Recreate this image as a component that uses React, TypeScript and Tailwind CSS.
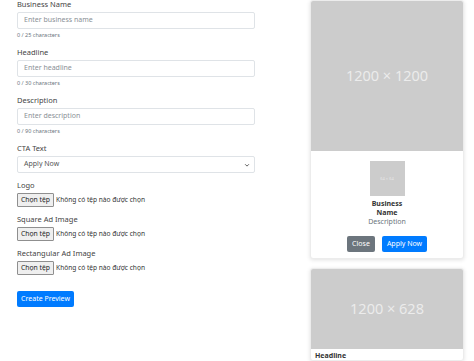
import React from 'react';

const font = { fontFamily: '"Noto Sans", "Open Sans", sans-serif' };

function Field({ label, placeholder, helper }: { label: string; placeholder: string; helper: string }) {
  return (
    <div className="mb-[8px]">
      <div className="h-[9px] mb-[3px] text-[7.5px] leading-[9px] text-[#444]">{label}</div>
      <div className="h-[17px] border border-[#dfe3e7] rounded-[2px] bg-white flex items-center px-[6px] text-[7px] text-[#8a9096]">
        {placeholder}
      </div>
      <div className="mt-[1px] h-[10px] text-[5.5px] leading-[10px] text-[#6c757d]">{helper}</div>
    </div>
  );
}

function FileField({ label }: { label: string }) {
  return (
    <div className="mb-[8px]">
      <div className="h-[9px] mb-[3px] text-[7.5px] leading-[9px] text-[#444]">{label}</div>
      <div className="flex items-center h-[14px] gap-[2px]">
        <span className="h-[14px] px-[3px] border border-[#8f8f8f] rounded-[1px] bg-[#efefef] text-[6.8px] leading-[12px] text-[#222]">
          Chọn tệp
        </span>
        <span className="text-[6.6px] text-[#333]">Không có tệp nào được chọn</span>
      </div>
    </div>
  );
}

export default function App() {
  return (
    <div className="w-[474px] h-[361px] overflow-hidden bg-white flex" style={font}>
      <div className="ml-[17px] w-[238px] shrink-0">
        <Field label="Business Name" placeholder="Enter business name" helper="0 / 25 characters" />
        <Field label="Headline" placeholder="Enter headline" helper="0 / 30 characters" />
        <Field label="Description" placeholder="Enter description" helper="0 / 90 characters" />

        <div className="mb-[8px]">
          <div className="h-[9px] mb-[3px] text-[7.5px] leading-[9px] text-[#444]">CTA Text</div>
          <div className="h-[17px] border border-[#dfe3e7] rounded-[2px] bg-white flex items-center justify-between pl-[6px] pr-[4px] text-[7px] text-[#555]">
            <span>Apply Now</span>
            <svg width="6" height="6" viewBox="0 0 16 16" fill="none" stroke="#555" strokeWidth="2.5">
              <path d="M3 6l5 5 5-5" />
            </svg>
          </div>
        </div>

        <FileField label="Logo" />
        <FileField label="Square Ad Image" />
        <FileField label="Rectangular Ad Image" />

        <button className="h-[16px] w-[57px] bg-[#007bff] rounded-[2px] text-white text-[7px]">Create Preview</button>
      </div>

      <div className="ml-[55px] w-[154px] shrink-0 flex flex-col gap-[9px]">
        <div className="border border-[#ececec] rounded-[3px] shadow-[0_1px_4px_rgba(0,0,0,0.12)] bg-white overflow-hidden">
          <div className="h-[150px] bg-[#cccccc] flex items-center justify-center text-[14.5px] text-[#ececec]" style={{ fontFamily: '"Open Sans", sans-serif' }}>
            1200 × 1200
          </div>
          <div className="pt-[10px] pb-[9px] flex flex-col items-center">
            <div className="w-[35px] h-[35px] bg-[#cccccc] flex items-center justify-center text-[4px] text-[#e6e6e6]">64 × 64</div>
            <div className="mt-[4px] w-[40px] text-center text-[7px] leading-[8.5px] font-bold text-[#333]">Business Name</div>
            <div className="text-[7px] leading-[9px] text-[#6c757d]">Description</div>
            <div className="mt-[10px] flex gap-[7px]">
              <button className="h-[16px] w-[28px] bg-[#6c757d] rounded-[2px] text-white text-[7px]">Close</button>
              <button className="h-[16px] w-[45px] bg-[#007bff] rounded-[2px] text-white text-[7px]">Apply Now</button>
            </div>
          </div>
        </div>

        <div className="border border-[#ececec] rounded-[3px] shadow-[0_1px_4px_rgba(0,0,0,0.12)] bg-white overflow-hidden">
          <div className="h-[80px] bg-[#cccccc] flex items-center justify-center text-[14.5px] text-[#ececec]" style={{ fontFamily: '"Open Sans", sans-serif' }}>
            1200 × 628
          </div>
          <div className="px-[4px] pt-[2px] text-[7px] font-bold text-[#333]">Headline</div>
        </div>
      </div>
    </div>
  );
}
